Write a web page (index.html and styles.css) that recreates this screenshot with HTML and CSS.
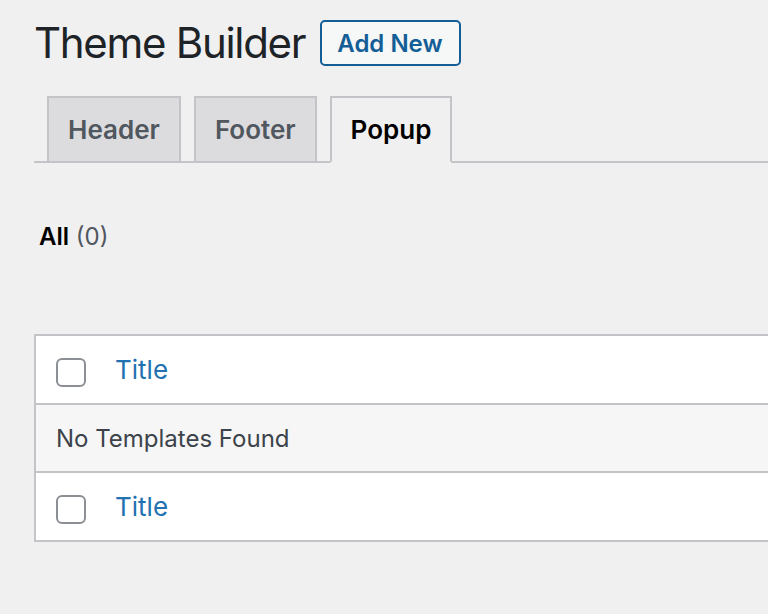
FILE: index.html
```html
<!DOCTYPE html>
<html lang="en">
<head>
<meta charset="utf-8">
<title>Theme Builder</title>
<link rel="stylesheet" href="styles.css">
</head>
<body>
<div class="wrap">
  <div class="heading">
    <h1 class="page-title">Theme Builder</h1>
    <a class="add-new" href="#">Add New</a>
  </div>
  <nav class="tabs">
    <a class="tab" href="#">Header</a>
    <a class="tab" href="#">Footer</a>
    <a class="tab active" href="#">Popup</a>
  </nav>
  <div class="filters"><span class="current">All</span> <span class="count">(0)</span></div>
  <div class="table">
    <div class="row head">
      <span class="checkbox"></span>
      <a class="col-title" href="#">Title</a>
    </div>
    <div class="row empty">No Templates Found</div>
    <div class="row foot">
      <span class="checkbox"></span>
      <a class="col-title" href="#">Title</a>
    </div>
  </div>
</div>
</body>
</html>
```

FILE: styles.css
```css
html, body {
  margin: 0;
  padding: 0;
  background: #f0f0f1;
  overflow: hidden;
}
body {
  font-family: Inter, "Liberation Sans", sans-serif;
  color: #3c434a;
}
.wrap {
  padding-left: 34px;
}
.heading {
  display: flex;
  align-items: center;
  padding-top: 20px;
  height: 46px;
}
.page-title {
  margin: 0;
  font-size: 42px;
  font-weight: 400;
  letter-spacing: -1.3px;
  line-height: 46px;
  color: #1d2327;
}
.add-new {
  margin-left: 15px;
  box-sizing: border-box;
  height: 46px;
  padding: 0 16px 0 15px;
  display: flex;
  align-items: center;
  border: 2px solid #135e96;
  border-radius: 5px;
  background: #f6f7f7;
  color: #135e96;
  font-size: 24px;
  font-weight: 600;
  text-decoration: none;
}
.tabs {
  display: flex;
  margin-top: 30px;
  border-bottom: 2px solid #c3c4c7;
  padding-left: 13px;
  gap: 13px;
}
.tab {
  display: block;
  margin-bottom: -2px;
  padding: 9px 19px;
  line-height: 45px;
  font-size: 26px;
  font-weight: 600;
  color: #50575e;
  background: #dcdcde;
  border: 2px solid #c3c4c7;
  text-decoration: none;
}
.tab.active {
  background: #f0f0f1;
  color: #000;
  border-bottom-color: #f0f0f1;
}
.filters {
  margin-top: 56px;
  padding-left: 5px;
  line-height: 36px;
  font-size: 24px;
}
.current {
  font-weight: 600;
  color: #000;
}
.count {
  color: #50575e;
}
.table {
  margin-top: 79px;
  margin-right: -20px;
  background: #fff;
  border: 2px solid #c3c4c7;
}
.row {
  display: flex;
  align-items: center;
  padding-left: 20px;
}
.row.head {
  height: 67px;
  border-bottom: 2px solid #c3c4c7;
}
.row.empty {
  height: 66px;
  background: #f6f6f7;
  border-bottom: 2px solid #c3c4c7;
  font-size: 24px;
  color: #3c434a;
}
.row.foot {
  height: 67px;
}
.checkbox {
  box-sizing: border-box;
  width: 30px;
  height: 29px;
  margin-top: 6px;
  border: 2px solid #8c8f94;
  border-radius: 6px;
  background: #fff;
}
.col-title {
  margin-left: 29px;
  font-size: 26px;
  color: #2271b1;
  text-decoration: none;
}
```
